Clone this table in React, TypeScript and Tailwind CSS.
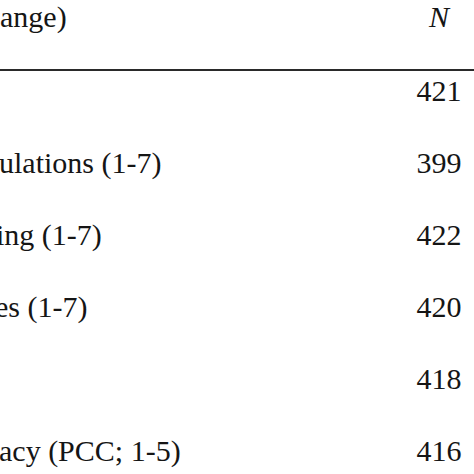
const rows = [
  { label: "", offset: "", n: "421" },
  { label: "ulations (1-7)", offset: "-ml-[1px]", n: "399" },
  { label: "ing (1-7)", offset: "-ml-[4px]", n: "422" },
  { label: "es (1-7)", offset: "-ml-[5px]", n: "420" },
  { label: "", offset: "", n: "418" },
  { label: "acy (PCC; 1-5)", offset: "-ml-[1px]", n: "416" },
];

export default function App() {
  return (
    <div
      className="w-[474px] h-[474px] overflow-hidden bg-white text-[#151515] text-[30px]"
      style={{ fontFamily: '"Liberation Serif", "Times New Roman", serif' }}
    >
      {/* header */}
      <div className="flex h-[71px] border-b-2 border-[#2a2a2a] leading-[33px]">
        <div className="flex-1 overflow-hidden whitespace-nowrap">
          <span className="block">ange)</span>
        </div>
        <div className="w-[58px] mr-[6px] text-center italic">N</div>
      </div>

      {/* body */}
      {rows.map((r) => (
        <div key={r.n} className="flex h-[72px] pt-[3px] leading-[33px]">
          <div className="flex-1 overflow-hidden whitespace-nowrap">
            <span className={`block ${r.offset}`}>{r.label}</span>
          </div>
          <div className="w-[58px] mr-[6px] text-center">{r.n}</div>
        </div>
      ))}
    </div>
  );
}
